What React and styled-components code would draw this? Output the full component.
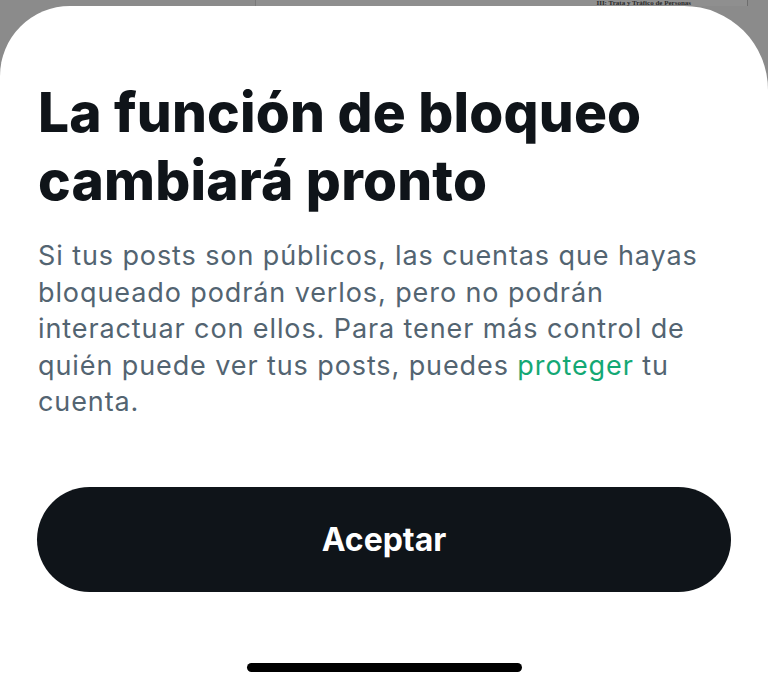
import React from "react";
import styled, { createGlobalStyle } from "styled-components";

const Global = createGlobalStyle`
  html, body { margin: 0; padding: 0; background: #8b8b8b; overflow: hidden; }
  * { box-sizing: border-box; }
`;

const Screen = styled.div`
  width: 768px;
  height: 689px;
  display: flex;
  flex-direction: column;
  background: #8b8b8b;
  overflow: hidden;
`;

const BackDoc = styled.div`
  height: 6px;
  flex: none;
  display: flex;
`;

const DocPage = styled.div`
  margin-left: 255px;
  width: 493px;
  height: 6px;
  background: #8f8f8f;
  border-left: 1px solid #7a7a7a;
  border-right: 1px solid #6e6e6e;
  display: flex;
  justify-content: flex-end;
  align-items: center;
  overflow: hidden;
  padding-right: 56px;
`;

const DocText = styled.span`
  font-family: "Liberation Serif", serif;
  font-size: 7px;
  line-height: 6px;
  font-weight: 700;
  color: #2a2a2a;
  white-space: nowrap;
  text-decoration: underline;
`;

const Sheet = styled.div`
  flex: 1;
  background: #ffffff;
  border-radius: 70px 84px 0 0;
  padding: 72px 37px 0 38px;
  display: flex;
  flex-direction: column;
`;

const Title = styled.h1`
  margin: 0;
  font-family: Inter, "Noto Sans", sans-serif;
  font-weight: 800;
  font-size: 55px;
  line-height: 68px;
  letter-spacing: 0.2px;
  color: #0f1419;
`;

const Body = styled.p`
  margin: 24px 0 0;
  font-family: Inter, "Noto Sans", sans-serif;
  font-weight: 400;
  font-size: 27px;
  line-height: 36.5px;
  letter-spacing: 0.9px;
  color: #536471;
`;

const Link = styled.span`
  color: #14a874;
`;

const Button = styled.button`
  margin-top: 66px;
  height: 105px;
  width: 694px;
  margin-left: -1px;
  border: none;
  border-radius: 53px;
  background: #0f1419;
  color: #ffffff;
  font-family: Inter, "Noto Sans", sans-serif;
  font-weight: 700;
  font-size: 32px;
  cursor: pointer;
`;

const HomeBar = styled.div`
  margin: 71px auto 0;
  width: 275px;
  height: 9px;
  border-radius: 5px;
  background: #000000;
`;

export default function App() {
  return (
    <>
      <Global />
      <Screen>
        <BackDoc>
          <DocPage>
            <DocText>III: Trata y Tráfico de Personas</DocText>
          </DocPage>
        </BackDoc>
        <Sheet>
          <Title>
            La función de bloqueo
            <br />
            cambiará pronto
          </Title>
          <Body>
            Si tus posts son públicos, las cuentas que hayas
            <br />
            bloqueado podrán verlos, pero no podrán
            <br />
            interactuar con ellos. Para tener más control de
            <br />
            quién puede ver tus posts, puedes <Link>proteger</Link> tu
            <br />
            cuenta.
          </Body>
          <Button>Aceptar</Button>
          <HomeBar />
        </Sheet>
      </Screen>
    </>
  );
}
